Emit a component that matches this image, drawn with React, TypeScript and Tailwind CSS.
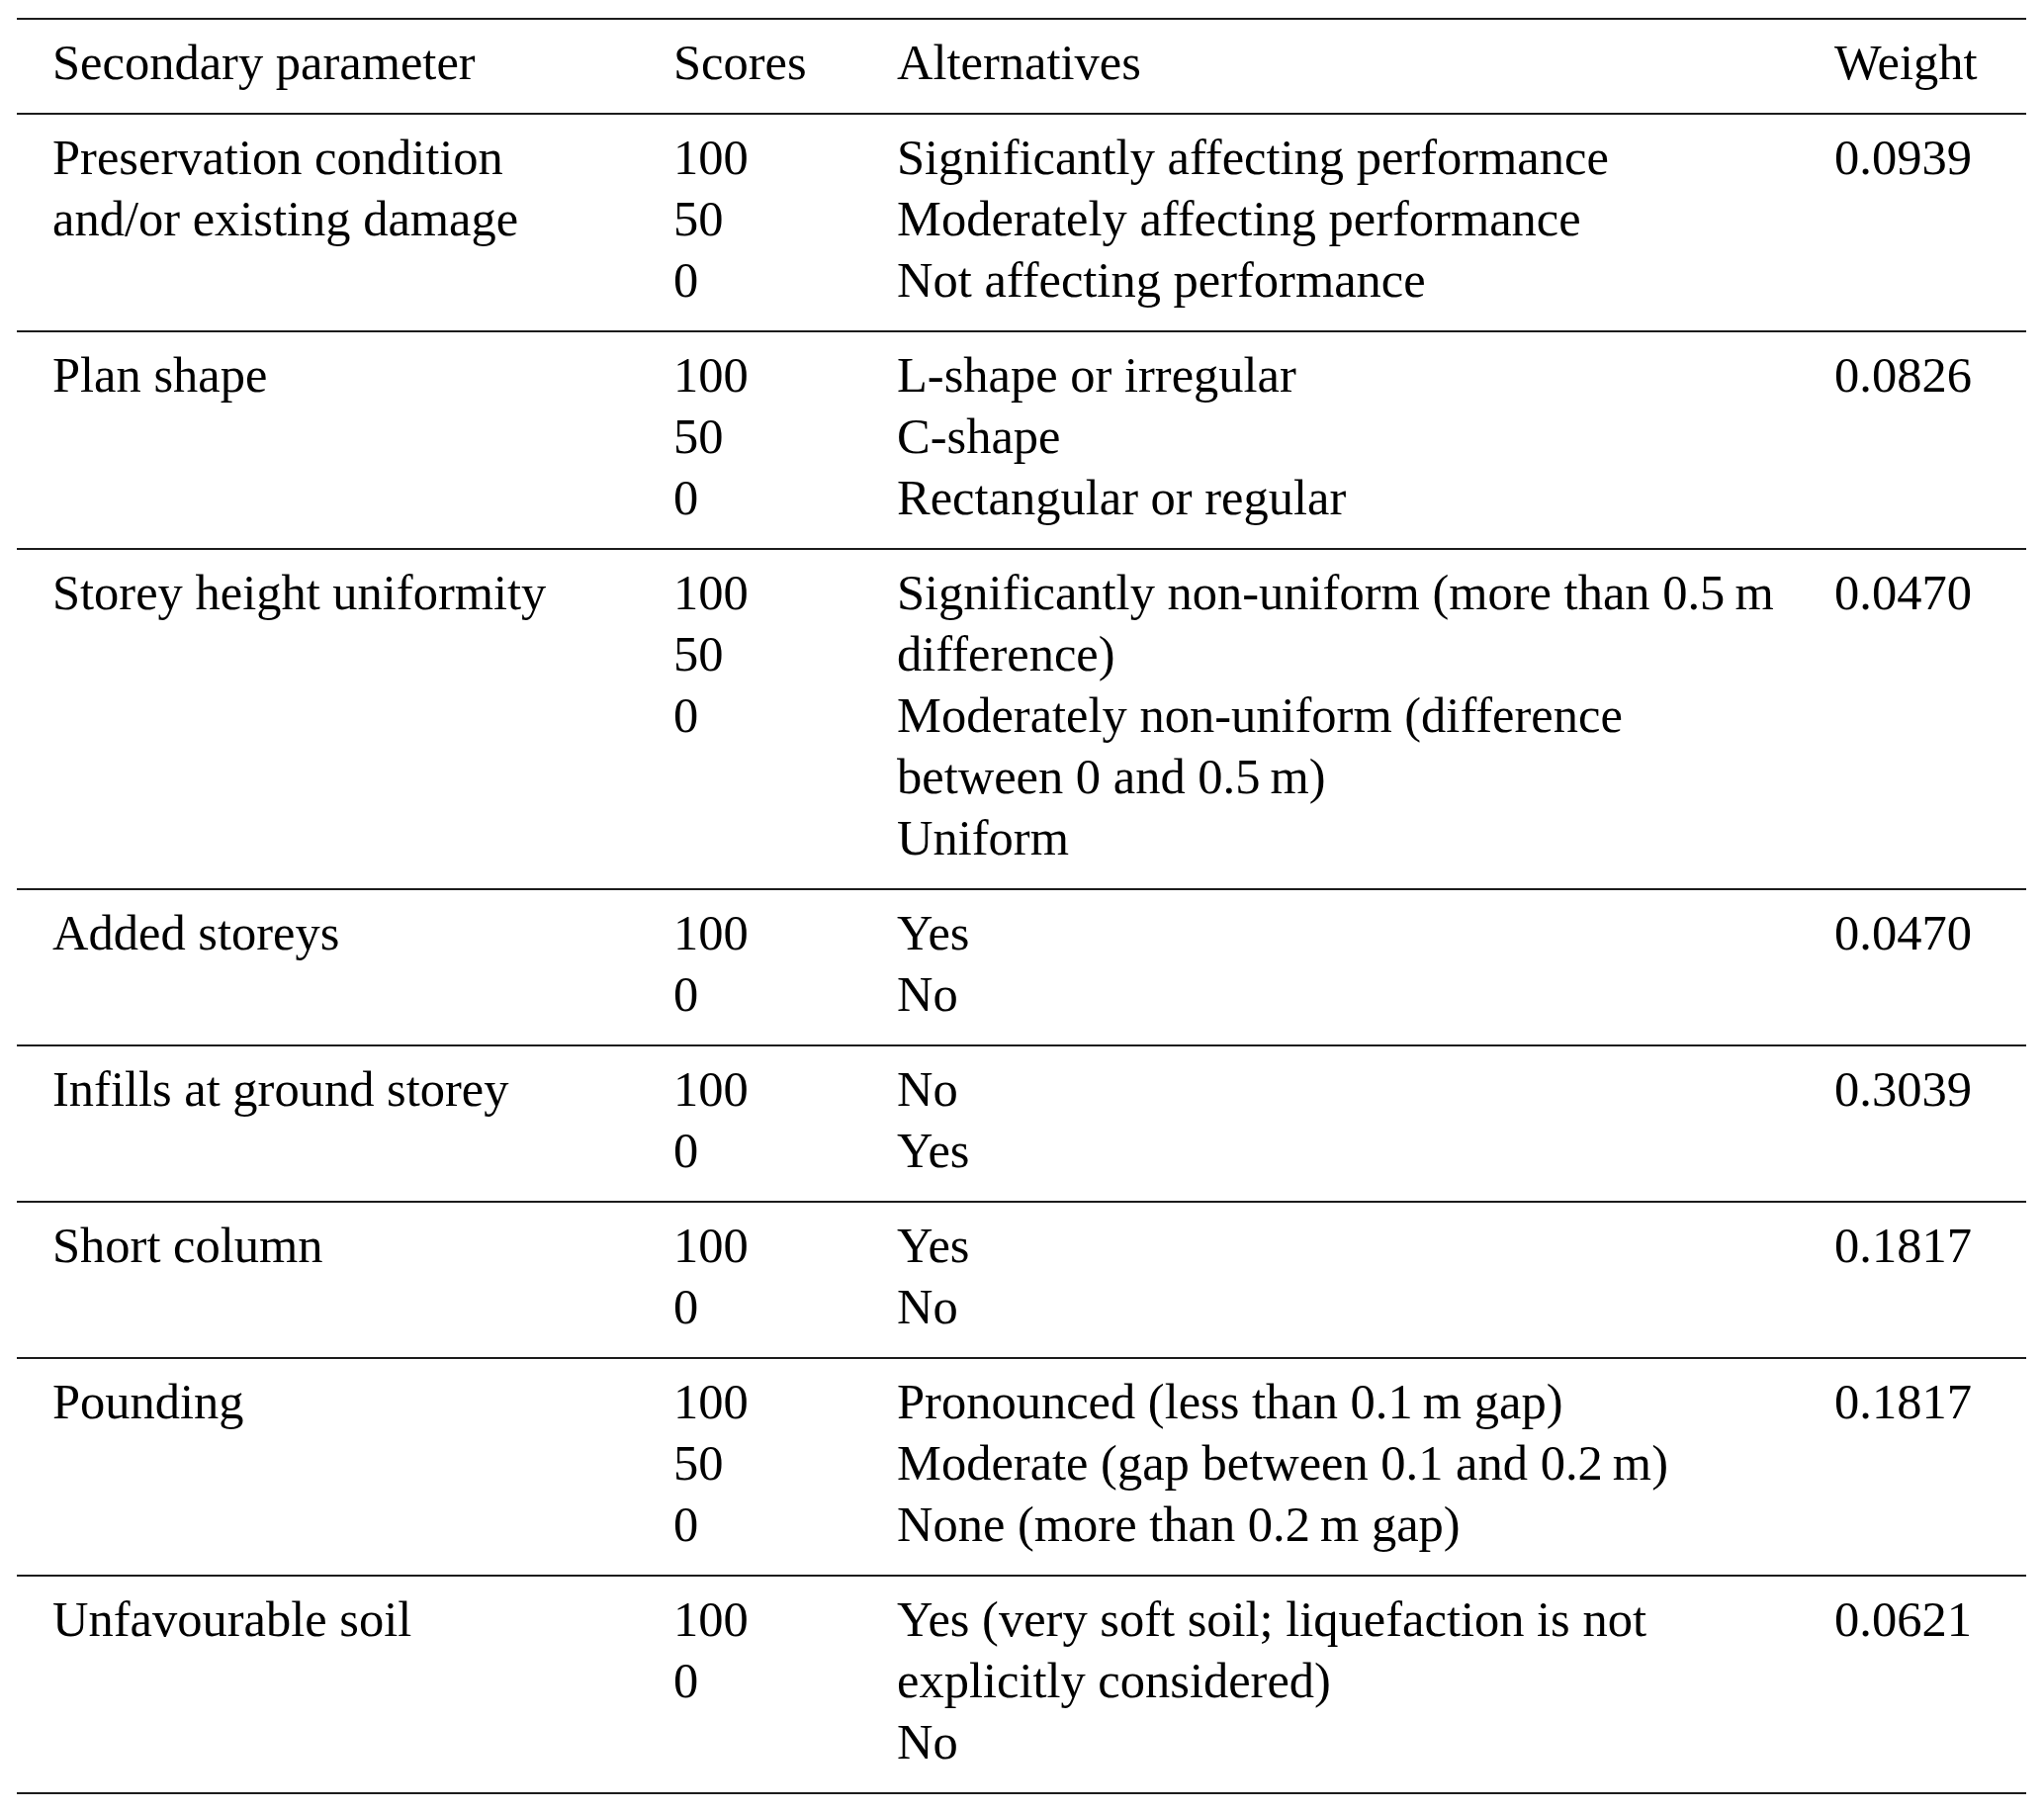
import React from "react";

type Row = {
  param: string[];
  scores: string[];
  alts: string[];
  weight: string;
};

const T = "\u2009";

const rows: Row[] = [
  {
    param: ["Preservation condition", "and/or existing damage"],
    scores: ["100", "50", "0"],
    alts: [
      "Significantly affecting performance",
      "Moderately affecting performance",
      "Not affecting performance",
    ],
    weight: "0.0939",
  },
  {
    param: ["Plan shape"],
    scores: ["100", "50", "0"],
    alts: ["L-shape or irregular", "C-shape", "Rectangular or regular"],
    weight: "0.0826",
  },
  {
    param: ["Storey height uniformity"],
    scores: ["100", "50", "0"],
    alts: [
      `Significantly non-uniform (more than 0.5${T}m`,
      "difference)",
      "Moderately non-uniform (difference",
      `between 0 and 0.5${T}m)`,
      "Uniform",
    ],
    weight: "0.0470",
  },
  {
    param: ["Added storeys"],
    scores: ["100", "0"],
    alts: ["Yes", "No"],
    weight: "0.0470",
  },
  {
    param: ["Infills at ground storey"],
    scores: ["100", "0"],
    alts: ["No", "Yes"],
    weight: "0.3039",
  },
  {
    param: ["Short column"],
    scores: ["100", "0"],
    alts: ["Yes", "No"],
    weight: "0.1817",
  },
  {
    param: ["Pounding"],
    scores: ["100", "50", "0"],
    alts: [
      `Pronounced (less than 0.1${T}m gap)`,
      `Moderate (gap between 0.1 and 0.2${T}m)`,
      `None (more than 0.2${T}m gap)`,
    ],
    weight: "0.1817",
  },
  {
    param: ["Unfavourable soil"],
    scores: ["100", "0"],
    alts: [
      "Yes (very soft soil; liquefaction is not",
      "explicitly considered)",
      "No",
    ],
    weight: "0.0621",
  },
];

function Lines({ items }: { items: string[] }) {
  return (
    <div className="flex flex-col">
      {items.map((t, i) => (
        <div key={i} className="whitespace-pre">
          {t}
        </div>
      ))}
    </div>
  );
}

export default function App() {
  return (
    <div className="min-h-[1833px] w-[2067px] bg-white pt-[18px] font-['Liberation_Serif','Times_New_Roman',serif] text-black">
      <div className="ml-[17px] w-[2032px] border-t-2 border-[#1c1c1c] text-[50.5px] leading-[62px]">
        <div className="grid grid-cols-[628px_226px_948px_1fr] border-b-2 border-[#1c1c1c] pb-[20px] pl-[36px] pt-[12px]">
          <div>Secondary parameter</div>
          <div>Scores</div>
          <div>Alternatives</div>
          <div>Weight</div>
        </div>
        {rows.map((r, i) => (
          <div
            key={i}
            className="grid grid-cols-[628px_226px_948px_1fr] border-b-2 border-[#1c1c1c] pb-[20px] pl-[36px] pt-[12px]"
          >
            <Lines items={r.param} />
            <Lines items={r.scores} />
            <Lines items={r.alts} />
            <div>{r.weight}</div>
          </div>
        ))}
      </div>
    </div>
  );
}
